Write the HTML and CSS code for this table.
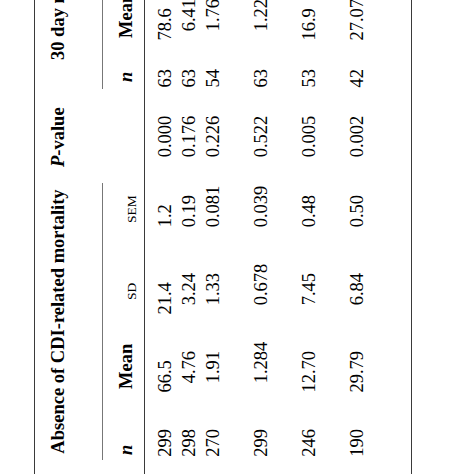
FILE: index.html
```html
<!DOCTYPE html>
<html>
<head>
<meta charset="utf-8">
<link rel="stylesheet" href="styles.css">
</head>
<body>
<div class="page">
  <div class="tbl">
    <div class="row head1">
      <div class="grp g1">Absence of CDI-related mortality</div>
      <div class="pv"><i>P</i>-value</div>
      <div class="grp g2">30 day mortality</div>
    </div>
    <div class="row head2">
      <div class="h hn1"><i>n</i></div>
      <div class="h hm1">Mean</div>
      <div class="h sc hsd">SD</div>
      <div class="h sc hsem">SEM</div>
      <div class="h hp"></div>
      <div class="h hn2"><i>n</i></div>
      <div class="h hm2">Mean</div>
      <div class="h"></div>
    </div>
    <div class="body">
      <div class="row">
        <div class="c k1">299</div>
        <div class="c k2"><span class="ip">66</span>.5</div>
        <div class="c k3"><span class="ip">21</span>.4</div>
        <div class="c k4"><span class="ip">1</span>.2</div>
        <div class="c k5"><span class="ip">0</span>.000</div>
        <div class="c k6">63</div>
        <div class="c k7"><span class="ip">78</span>.6</div>
        <div class="c"></div>
      </div>
      <div class="row">
        <div class="c k1">298</div>
        <div class="c k2"><span class="ip">4</span>.76</div>
        <div class="c k3"><span class="ip">3</span>.24</div>
        <div class="c k4"><span class="ip">0</span>.19</div>
        <div class="c k5"><span class="ip">0</span>.176</div>
        <div class="c k6">63</div>
        <div class="c k7"><span class="ip">6</span>.41</div>
        <div class="c"></div>
      </div>
      <div class="row">
        <div class="c k1">270</div>
        <div class="c k2"><span class="ip">1</span>.91</div>
        <div class="c k3"><span class="ip">1</span>.33</div>
        <div class="c k4"><span class="ip">0</span>.081</div>
        <div class="c k5"><span class="ip">0</span>.226</div>
        <div class="c k6">54</div>
        <div class="c k7"><span class="ip">1</span>.76</div>
        <div class="c"></div>
      </div>
      <div class="row gap">
        <div class="c k1">299</div>
        <div class="c k2"><span class="ip">1</span>.284</div>
        <div class="c k3"><span class="ip">0</span>.678</div>
        <div class="c k4"><span class="ip">0</span>.039</div>
        <div class="c k5"><span class="ip">0</span>.522</div>
        <div class="c k6">63</div>
        <div class="c k7"><span class="ip">1</span>.222</div>
        <div class="c"></div>
      </div>
      <div class="row gap">
        <div class="c k1">246</div>
        <div class="c k2"><span class="ip">12</span>.70</div>
        <div class="c k3"><span class="ip">7</span>.45</div>
        <div class="c k4"><span class="ip">0</span>.48</div>
        <div class="c k5"><span class="ip">0</span>.005</div>
        <div class="c k6">53</div>
        <div class="c k7"><span class="ip">16</span>.9</div>
        <div class="c"></div>
      </div>
      <div class="row gap">
        <div class="c k1">190</div>
        <div class="c k2"><span class="ip">29</span>.79</div>
        <div class="c k3"><span class="ip">6</span>.84</div>
        <div class="c k4"><span class="ip">0</span>.50</div>
        <div class="c k5"><span class="ip">0</span>.002</div>
        <div class="c k6">42</div>
        <div class="c k7"><span class="ip">27</span>.07</div>
        <div class="c"></div>
      </div>
    </div>
  </div>
</div>
</body>
</html>
```

FILE: styles.css
```css
html, body {
  margin: 0;
  padding: 0;
  background: #ffffff;
  overflow: hidden;
}

.page {
  width: 474px;
  height: 474px;
  overflow: hidden;
  transform: rotate(-90deg);
  font-family: "Liberation Serif", "Times New Roman", serif;
  font-size: 18.5px;
  line-height: 24px;
  color: #000000;
  background: #ffffff;
}

.tbl {
  width: 600px;
  margin-top: 34px;
  border-top: 1.5px solid #3a3a3a;
  border-bottom: 1.5px solid #3a3a3a;
}

.row {
  display: grid;
  grid-template-columns: 62px 78px 80px 80px 80px 45px 75px 100px;
  align-items: start;
  white-space: nowrap;
}

/* group header row */
.grp {
  font-weight: bold;
  padding-top: 11px;
  padding-bottom: 32px;
  border-bottom: 1px solid #777777;
}

.g1 {
  grid-column: 1 / 5;
  margin: 0 9px 0 14px;
  text-align: center;
}

.g2 {
  grid-column: 6 / 9;
  margin-left: 5px;
  padding-left: 29px;
}

.pv {
  grid-column: 5 / 6;
  font-weight: bold;
  padding-top: 11px;
  padding-left: 7px;
}

/* sub header row */
.head2 {
  border-bottom: 1.5px solid #3a3a3a;
}

.h {
  font-weight: bold;
  padding-top: 11px;
  padding-bottom: 6px;
  height: 24px;
}

.sc {
  font-weight: normal;
  font-size: 13.5px;
  padding-top: 16.5px;
  padding-bottom: 0.5px;
}

.hn1 { padding-left: 19px; }
.hm1 { padding-left: 23px; }
.hsd { padding-left: 34px; }
.hsem { padding-left: 31px; }
.hn2 { padding-left: 12px; }
.hm2 { padding-left: 11px; }

/* body */
.body {
  padding-top: 7.5px;
  padding-bottom: 42px;
}

.gap {
  padding-top: 24px;
}

.ip {
  display: inline-block;
  text-align: right;
}

.k1 { text-align: right; padding-right: 17px; }
.k2 .ip { width: 38px; }
.k3 .ip { width: 38px; }
.k4 .ip { width: 36px; }
.k5 .ip { width: 26px; }
.k6 { text-align: right; padding-right: 20px; }
.k7 .ip { width: 27px; }
```
